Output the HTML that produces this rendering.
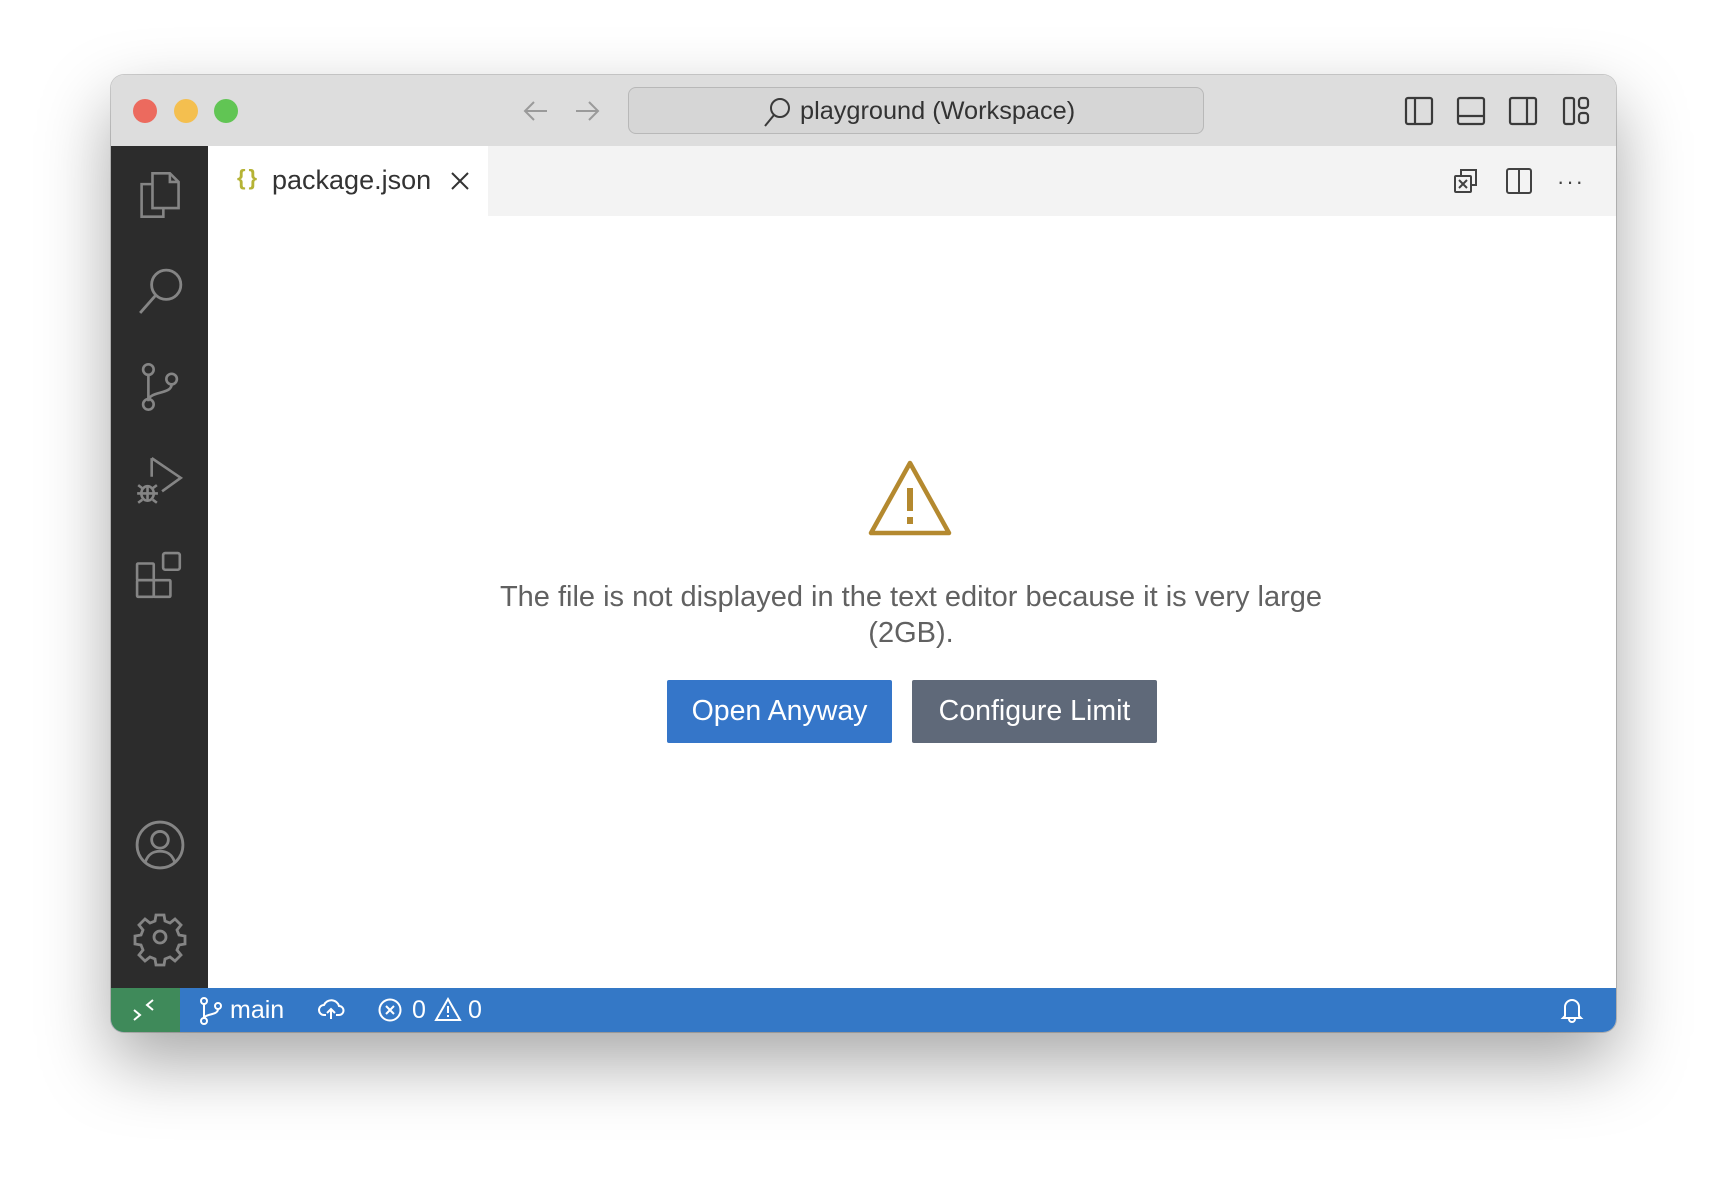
<!DOCTYPE html>
<html><head><meta charset="utf-8"><style>
*{margin:0;padding:0;box-sizing:border-box}
body{width:1728px;height:1180px;background:#fff;position:relative;overflow:hidden;font-family:"Liberation Sans",sans-serif}
.win{position:absolute;left:111px;top:75px;width:1505px;height:957px;border-radius:13px;overflow:hidden;box-shadow:0 30px 70px rgba(0,0,0,.35),0 0 0 1px rgba(0,0,0,.18);background:#fff}
.title{position:absolute;left:0;top:0;width:100%;height:71px;background:#dddddd}
.dot{position:absolute;top:24px;width:24px;height:24px;border-radius:50%}
.abs{position:absolute}
.act{position:absolute;left:0;top:71px;width:97px;height:842px;background:#2c2c2c}
.tabbar{position:absolute;left:97px;top:71px;right:0;height:70px;background:#f3f3f3}
.tab{position:absolute;left:0;top:0;width:280px;height:70px;background:#fff}
.status{position:absolute;left:0;top:913px;width:100%;height:44px;background:#3478c6;color:#fff;font-size:25px}
.btn{position:absolute;top:605px;height:63px;color:#fff;font-size:28.5px;line-height:63px;text-align:center;border-radius:2px}
svg{position:absolute;overflow:visible}
</style></head><body>
<div class="win">
 <div class="title">
  <div class="dot" style="left:22px;background:#ec6a5e"></div>
  <div class="dot" style="left:63px;background:#f4bf4f"></div>
  <div class="dot" style="left:103px;background:#61c554"></div>
  <svg style="left:412px;top:25px" width="26" height="22" viewBox="0 0 26 22" fill="none" stroke="#9a9a9a" stroke-width="2"><path d="M24 11H2M11 2L2 11l9 9"/></svg>
  <svg style="left:463px;top:25px" width="26" height="22" viewBox="0 0 26 22" fill="none" stroke="#9a9a9a" stroke-width="2"><path d="M2 11h22M15 2l9 9-9 9"/></svg>
  <div class="abs" style="left:517px;top:12px;width:576px;height:47px;border:1.5px solid #b8b8b8;border-radius:8px;background:#d6d6d6"></div>
  <svg style="left:652px;top:22px" width="28" height="30" viewBox="0 0 28 30" fill="none" stroke="#3a3a3a" stroke-width="2"><circle cx="17" cy="11" r="9"/><path d="M11 18L2 29"/></svg>
  <div class="abs" style="left:689px;top:22px;font-size:25.3px;color:#333">playground (Workspace)</div>
  <svg style="left:1294px;top:22px" width="28" height="28" viewBox="0 0 28 28" fill="none" stroke="#3a3a3a" stroke-width="2.2"><rect x="1" y="1" width="26" height="26" rx="2"/><path d="M10 1v26"/></svg>
  <svg style="left:1346px;top:22px" width="28" height="28" viewBox="0 0 28 28" fill="none" stroke="#3a3a3a" stroke-width="2.2"><rect x="1" y="1" width="26" height="26" rx="2"/><path d="M1 19h26"/></svg>
  <svg style="left:1398px;top:22px" width="28" height="28" viewBox="0 0 28 28" fill="none" stroke="#3a3a3a" stroke-width="2.2"><rect x="1" y="1" width="26" height="26" rx="2"/><path d="M18 1v26"/></svg>
  <svg style="left:1452px;top:22px" width="26" height="28" viewBox="0 0 26 28" fill="none" stroke="#3a3a3a" stroke-width="2.2"><rect x="1" y="1" width="10" height="26" rx="2"/><rect x="16" y="1" width="9" height="10" rx="3"/><rect x="16" y="16" width="9" height="10" rx="3"/></svg>
 </div>
 <div class="act">
  <svg style="left:26px;top:24px" width="44" height="50" viewBox="0 0 40 46" fill="none" stroke="#858585" stroke-width="2.4"><path d="M14 13H4v30h20v-8"/><path d="M14 3h16l8 8v24H14z"/><path d="M30 3v8h8"/></svg>
  <svg style="left:27px;top:121px" width="46" height="48" viewBox="0 0 44 46" fill="none" stroke="#858585" stroke-width="2.7"><circle cx="27" cy="17" r="14"/><path d="M17 27L2 44"/></svg>
  <svg style="left:30px;top:216px" width="38" height="51" viewBox="0 0 36 48" fill="none" stroke="#858585" stroke-width="2.5"><circle cx="7" cy="7" r="5"/><circle cx="7" cy="40" r="5"/><circle cx="29" cy="16" r="5"/><path d="M7 12v23M29 21c0 10-22 6-22 16"/></svg>
  <svg style="left:24px;top:309px" width="50" height="54" viewBox="0 0 48 52" fill="none" stroke="#858585" stroke-width="2.5"><path d="M16 3l28 19-18 13M16 3v18"/><ellipse cx="12" cy="37" rx="6" ry="7"/><path d="M2 37h20M3 29l4 3M21 29l-4 3M3 46l4-3M21 46l-4-3M12 30v14"/></svg>
  <svg style="left:24px;top:405px" width="50" height="50" viewBox="0 0 48 48" fill="none" stroke="#858585" stroke-width="2.5"><rect x="2" y="12" width="16" height="16" rx="1"/><rect x="2" y="28" width="16" height="16" rx="1"/><rect x="18" y="28" width="16" height="16" rx="1"/><rect x="27" y="2" width="16" height="16" rx="2"/></svg>
  <svg style="left:24px;top:674px" width="50" height="50" viewBox="0 0 48 48" fill="none" stroke="#858585" stroke-width="2.7"><circle cx="24" cy="24" r="22"/><circle cx="24" cy="19" r="8"/><path d="M10 40c3-8 8-10 14-10s11 2 14 10"/></svg>
  <svg style="left:24px;top:766px" width="50" height="50" viewBox="0 0 50 50" fill="none" stroke="#858585" stroke-width="2.8"><path d="M21 3h8l1 6 5 2 5-4 6 6-4 5 2 5 6 1v8l-6 1-2 5 4 5-6 6-5-4-5 2-1 6h-8l-1-6-5-2-5 4-6-6 4-5-2-5-6-1v-8l6-1 2-5-4-5 6-6 5 4 5-2z"/><circle cx="25" cy="25" r="6"/></svg>
 </div>
 <div class="tabbar">
  <div class="tab">
   <div class="abs" style="left:29px;top:19px;font-size:22px;color:#b5b335;font-weight:bold;letter-spacing:3px">{}</div>
   <div class="abs" style="left:64px;top:19px;font-size:27px;color:#333">package.json</div>
   <svg style="left:243px;top:26px" width="18" height="18" viewBox="0 0 18 18" stroke="#333" stroke-width="2"><path d="M1 1l16 16M17 1L1 17"/></svg>
  </div>
  <svg style="left:1245px;top:22px" width="26" height="26" viewBox="0 0 26 26" fill="none" stroke="#424242" stroke-width="2"><path d="M8 7V2h15v15h-5"/><rect x="2" y="8" width="16" height="16" rx="1"/><path d="M6 12l8 8M14 12l-8 8"/></svg>
  <svg style="left:1298px;top:22px" width="26" height="26" viewBox="0 0 26 26" fill="none" stroke="#424242" stroke-width="2"><rect x="1" y="1" width="24" height="24" rx="2"/><path d="M13 1v24"/></svg>
  <div class="abs" style="left:1349px;top:23px;font-size:22px;color:#424242;letter-spacing:2px">···</div>
 </div>
 <svg style="left:757px;top:384px" width="84" height="78" viewBox="0 0 84 78" fill="none"><path d="M42 4L3 74h78z" stroke="#b4892f" stroke-width="4.5" stroke-linejoin="round"/><path d="M42 29v23" stroke="#b4892f" stroke-width="6"/><rect x="39" y="58" width="6" height="7" fill="#b4892f"/></svg>
 <div class="abs" style="left:97px;top:504px;width:1406px;text-align:center;font-size:29px;line-height:36px;color:#616161">The file is not displayed in the text editor because it is very large<br>(2GB).</div>
 <div class="btn" style="left:556px;width:225px;background:#3576c9">Open Anyway</div>
 <div class="btn" style="left:801px;width:245px;background:#5f6979">Configure Limit</div>
 <div class="status">
  <div class="abs" style="left:0;top:0;width:69px;height:44px;background:#3f8a5a"></div>
  <svg style="left:22px;top:10px" width="22" height="24" viewBox="0 0 22 24" fill="none" stroke="#fff" stroke-width="2"><path d="M1 12l6 5-6 5M20 2l-6 5 6 5"/></svg>
  <svg style="left:88px;top:9px" width="24" height="28" viewBox="0 0 24 28" fill="none" stroke="#fff" stroke-width="2"><circle cx="5" cy="4" r="3"/><circle cx="5" cy="24" r="3"/><circle cx="19" cy="9" r="3"/><path d="M5 7v14M19 12c0 7-14 4-14 10"/></svg>
  <div class="abs" style="left:119px;top:8px">main</div>
  <svg style="left:207px;top:11px" width="26" height="22" viewBox="0 0 26 22" fill="none" stroke="#fff" stroke-width="2"><path d="M8 16H6a5 5 0 010-10 8 8 0 0115 1 4 4 0 010 9h-3"/><path d="M13 20V10M9 14l4-4 4 4"/></svg>
  <svg style="left:267px;top:10px" width="24" height="24" viewBox="0 0 24 24" fill="none" stroke="#fff" stroke-width="2"><circle cx="12" cy="12" r="10.5"/><path d="M8 8l8 8M16 8l-8 8"/></svg>
  <div class="abs" style="left:301px;top:8px">0</div>
  <svg style="left:324px;top:9px" width="26" height="24" viewBox="0 0 26 24" fill="none" stroke="#fff" stroke-width="2"><path d="M13 2L1 23h24z"/><path d="M13 9v7M13 18v2"/></svg>
  <div class="abs" style="left:357px;top:8px">0</div>
  <svg style="left:1450px;top:9px" width="22" height="26" viewBox="0 0 22 26" fill="none" stroke="#fff" stroke-width="2"><path d="M4 19V10a7 7 0 0114 0v9l2 2H2z"/><path d="M8 22a3 3 0 006 0"/></svg>
 </div>
</div>
</body></html>
